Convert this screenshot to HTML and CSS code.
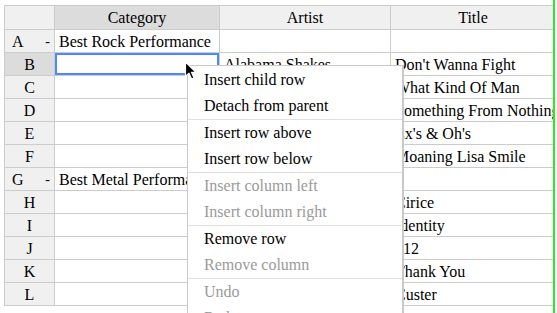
FILE: index.html
```html
<!DOCTYPE html>
<html lang="en">

<head>
    <meta charset="UTF-8">
    <meta name="viewport" content="width=device-width, initial-scale=1.0">
    <title>Grammy nominees - nested rows</title>
    <link rel="stylesheet" href="styles.css">
</head>

<body>
    <div class="sheet">
        <table class="grid">
            <colgroup>
                <col class="col-head">
                <col class="col-category">
                <col class="col-artist">
                <col class="col-title">
            </colgroup>
            <thead>
                <tr>
                    <th class="corner"></th>
                    <th class="highlight">Category</th>
                    <th>Artist</th>
                    <th>Title</th>
                </tr>
            </thead>
            <tbody>
                <tr>
                    <th class="row-head"><div class="parent-head"><span>A</span><span class="toggle">-</span></div></th>
                    <td>Best Rock Performance</td>
                    <td></td>
                    <td></td>
                </tr>
                <tr>
                    <th class="row-head highlight">B</th>
                    <td class="current"></td>
                    <td>Alabama Shakes</td>
                    <td>Don't Wanna Fight</td>
                </tr>
                <tr>
                    <th class="row-head">C</th>
                    <td></td>
                    <td>Florence &amp; The Machine</td>
                    <td>What Kind Of Man</td>
                </tr>
                <tr>
                    <th class="row-head">D</th>
                    <td></td>
                    <td>Foo Fighters</td>
                    <td>Something From Nothing</td>
                </tr>
                <tr>
                    <th class="row-head">E</th>
                    <td></td>
                    <td>Elle King</td>
                    <td>Ex's &amp; Oh's</td>
                </tr>
                <tr>
                    <th class="row-head">F</th>
                    <td></td>
                    <td>Wolf Alice</td>
                    <td>Moaning Lisa Smile</td>
                </tr>
                <tr>
                    <th class="row-head"><div class="parent-head"><span>G</span><span class="toggle">-</span></div></th>
                    <td>Best Metal Performance</td>
                    <td></td>
                    <td></td>
                </tr>
                <tr>
                    <th class="row-head">H</th>
                    <td></td>
                    <td>Ghost</td>
                    <td>Cirice</td>
                </tr>
                <tr>
                    <th class="row-head">I</th>
                    <td></td>
                    <td>August Burns Red</td>
                    <td>Identity</td>
                </tr>
                <tr>
                    <th class="row-head">J</th>
                    <td></td>
                    <td>Lamb Of God</td>
                    <td>512</td>
                </tr>
                <tr>
                    <th class="row-head">K</th>
                    <td></td>
                    <td>Sevendust</td>
                    <td>Thank You</td>
                </tr>
                <tr>
                    <th class="row-head">L</th>
                    <td></td>
                    <td>Slipknot</td>
                    <td>Custer</td>
                </tr>
            </tbody>
        </table>

        <ul class="context-menu">
            <li>Insert child row</li>
            <li>Detach from parent</li>
            <li class="sep"></li>
            <li>Insert row above</li>
            <li>Insert row below</li>
            <li class="sep"></li>
            <li class="disabled">Insert column left</li>
            <li class="disabled">Insert column right</li>
            <li class="sep"></li>
            <li>Remove row</li>
            <li class="disabled">Remove column</li>
            <li class="sep"></li>
            <li class="disabled">Undo</li>
            <li class="disabled">Redo</li>
        </ul>

        <svg class="cursor" width="14" height="20" viewBox="0 0 14 20">
            <path d="M1.5 1 L1.5 15.5 L5 12.2 L7.6 18 L10 17 L7.5 11.3 L12 11.3 Z" fill="#000" stroke="#fff" stroke-width="1.2" stroke-linejoin="round"/>
        </svg>
    </div>
</body>

</html>
```

FILE: styles.css
```css
html,
body {
    margin: 0;
    padding: 0;
    background-color: #ffffff;
}

.sheet {
    position: relative;
    width: 555px;
    height: 313px;
    border-right: 2px solid #22ee22;
    overflow: hidden;
    padding: 5px 0 0 4px;
    box-sizing: border-box;
    font-family: "Liberation Serif", "Times New Roman", serif;
    font-size: 16px;
    color: #000000;
}

.grid {
    border-collapse: collapse;
    table-layout: fixed;
    width: 551px;
}

.col-head {
    width: 50px;
}

.col-category {
    width: 165px;
}

.col-artist {
    width: 171px;
}

.col-title {
    width: 165px;
}

.grid th,
.grid td {
    border: 1px solid #cccccc;
    padding: 0 4px;
    height: 22px;
    line-height: 21px;
    white-space: nowrap;
    overflow: hidden;
    text-align: left;
    font-weight: normal;
}

.grid thead th {
    height: 23px;
    text-align: center;
    background-color: #f0f0f0;
}

.grid .row-head {
    text-align: center;
    background-color: #f0f0f0;
    padding: 0;
}

.grid .highlight {
    background-color: #dcdcdc;
}

.parent-head {
    display: flex;
    justify-content: space-between;
    padding: 0 4px 0 7px;
}

.toggle {
    font-size: 14px;
}

.grid td.current {
    box-shadow: inset 0 0 0 2px #4b89ff;
}

.context-menu {
    position: absolute;
    left: 187px;
    top: 65px;
    width: 214px;
    margin: 0;
    padding: 1px 0 0 0;
    list-style: none;
    background-color: #ffffff;
    border: 1px solid #c8c8c8;
    box-shadow: 1px 0 0 #c8c8c8;
}

.context-menu li {
    height: 26px;
    line-height: 26px;
    padding-left: 16px;
    white-space: nowrap;
}

.context-menu li.sep {
    height: 1px;
    padding: 0;
    background-color: #e0e0e0;
}

.context-menu li.disabled {
    color: #9a9a9a;
}

.cursor {
    position: absolute;
    left: 184px;
    top: 61px;
}
```
